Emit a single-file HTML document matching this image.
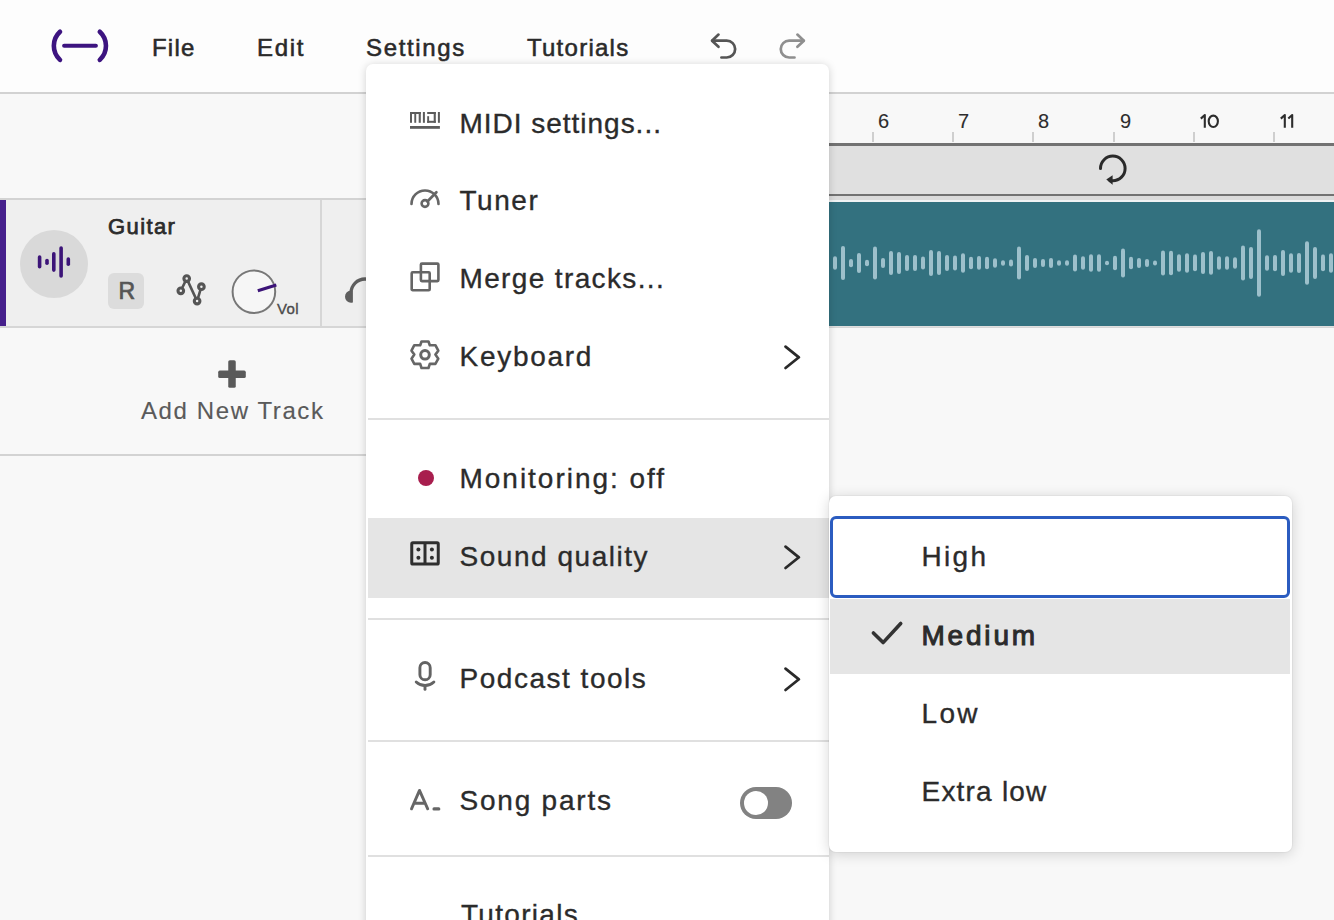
<!DOCTYPE html>
<html><head><meta charset="utf-8">
<style>
*{margin:0;padding:0;box-sizing:border-box}
html,body{width:1334px;height:920px;overflow:hidden;background:#f8f8f8;font-family:"Liberation Sans",sans-serif;color:#2b2b2b}
.a{position:absolute}
.t{position:absolute;line-height:1;white-space:nowrap;-webkit-text-stroke:0.35px currentColor}
#hdr{left:0;top:0;width:1334px;height:94px;background:#fdfdfd;border-bottom:2px solid #d2d2d2}
.hm{font-size:24px;top:35.5px;color:#2a2a2a;-webkit-text-stroke:0.55px #2a2a2a}
#ruler{left:366px;top:95px;width:968px;height:48px;background:#f8f8f8}
.tick{position:absolute;top:132px;width:2px;height:10px;background:#cfcfcf}
.rn{font-size:20px;top:111px;color:#2d2d2d;-webkit-text-stroke:0.1px #2d2d2d}
#loop{left:366px;top:143px;width:968px;height:53px;background:#e0e0e0;border-top:3px solid #727272;border-bottom:2px solid #727272}
#clip{left:829px;top:202px;width:505px;height:124px;background:#33717f}
#trk{left:0;top:198px;width:1334px;height:130px;background:#efefef;border-bottom:2px solid #d6d6d6;border-top:2px solid #d3d3d3}
.mi{font-size:28px;left:459.5px;color:#2b2b2b}
.sm{font-size:28px;left:921.5px;color:#2b2b2b}
.div{position:absolute;left:368px;width:461px;height:2px;background:#e0e0e0}
</style></head><body>

<!-- header -->
<div id="hdr" class="a"></div>
<svg class="a" style="left:48px;top:26px" width="64" height="40" viewBox="0 0 64 40">
 <g fill="none" stroke="#3d1480" stroke-width="4.6" stroke-linecap="round">
 <path d="M12 5.8 A19.1 19.1 0 0 0 12 33.9"/>
 <path d="M51.8 5.8 A19.1 19.1 0 0 1 51.8 33.9"/>
 <path d="M16.1 19.7 H47.9" stroke-width="4"/>
 </g>
</svg>
<div class="t hm" style="left:152px;letter-spacing:1.2px">File</div>
<div class="t hm" style="left:257px;letter-spacing:1.67px">Edit</div>
<div class="t hm" style="left:366px;letter-spacing:1.66px">Settings</div>
<div class="t hm" style="left:527px;letter-spacing:1.25px">Tutorials</div>
<svg class="a" style="left:706px;top:29px" width="36" height="34" viewBox="0 0 36 34">
 <g fill="none" stroke="#555" stroke-width="2.7" stroke-linecap="round" stroke-linejoin="round">
 <path d="M6.5 11.7 H20.75 A8.4 8.4 0 0 1 20.75 28.5 H15.4"/>
 <path d="M12.5 5.6 L6 11.7 L12.5 17.8"/>
 </g>
</svg>
<svg class="a" style="left:774.2px;top:29px" width="36" height="34" viewBox="0 0 36 34">
 <g fill="none" stroke="#8f8f8f" stroke-width="2.7" stroke-linecap="round" stroke-linejoin="round" transform="translate(35.9 0) scale(-1 1)">
 <path d="M6.5 11.7 H20.75 A8.4 8.4 0 0 1 20.75 28.5 H15.4"/>
 <path d="M12.5 5.6 L6 11.7 L12.5 17.8"/>
 </g>
</svg>

<!-- ruler -->
<div id="ruler" class="a"></div>
<div class="tick" style="left:872px"></div><div class="t rn" style="left:878px">6</div>
<div class="tick" style="left:952px"></div><div class="t rn" style="left:958px">7</div>
<div class="tick" style="left:1032px"></div><div class="t rn" style="left:1038px">8</div>
<div class="tick" style="left:1113px"></div><div class="t rn" style="left:1120px">9</div>
<div class="tick" style="left:1193px"></div>
<div class="tick" style="left:1273px"></div><svg class="a" style="left:1195px;top:110px" width="105" height="22" viewBox="0 0 105 22"><g stroke="#2d2d2d" stroke-width="2.1" fill="none" stroke-linejoin="round"><path d="M5.8 8.6 L9.8 5 V17.8"/><ellipse cx="18.3" cy="11.3" rx="4.6" ry="5.7"/><path d="M85.8 8.6 L89.8 5 V17.8"/><path d="M93.3 8.6 L97.2 5 V17.8"/></g></svg>

<div id="loop" class="a"></div>
<svg class="a" style="left:1096px;top:152px" width="34" height="34" viewBox="0 0 34 34">
 <path d="M4.5 16.4 A12.3 12.3 0 1 1 16.8 28.7 H14" fill="none" stroke="#2a2a2a" stroke-width="3" stroke-linecap="round"/>
 <path d="M10.3 27.5 L16.6 23.2 L16.6 32.7 Z" fill="#2a2a2a"/>
</svg>

<!-- track row -->
<div id="trk" class="a"></div>
<div class="a" style="left:0;top:200px;width:6px;height:126px;background:#46208c"></div>
<div class="a" style="left:320px;top:200px;width:2px;height:126px;background:#d6d6d6"></div>
<div class="a" style="left:20px;top:230px;width:68px;height:68px;border-radius:50%;background:#d9d9d9"></div>
<svg class="a" style="left:20px;top:230px" width="68" height="68" viewBox="0 0 68 68">
 <g stroke="#3c1478" stroke-width="3.6" stroke-linecap="round">
 <path d="M19.6 27 V36.8"/><path d="M27 30.6 V33.2"/><path d="M33.8 23.8 V40.1"/><path d="M41.1 18.1 V45.9"/><path d="M48.3 29 V34.2"/>
 </g>
</svg>
<div class="t" style="left:108px;top:216px;font-size:22px;color:#2b2b2b;letter-spacing:1.4px;-webkit-text-stroke:0.75px #2b2b2b">Guitar</div>
<div class="a" style="left:108px;top:273px;width:36px;height:36px;border-radius:6px;background:#dcdcdc"></div>
<div class="t" style="left:118.5px;top:280.3px;font-size:23px;color:#555;-webkit-text-stroke:0.7px #555">R</div>
<svg class="a" style="left:170px;top:268px" width="40" height="40" viewBox="0 0 40 40">
 <g fill="none" stroke="#555">
 <path d="M10.8 22.8 L16.7 10.6 L27.1 33.1 L31.4 18.7" stroke-width="2.6"/>
 <g stroke-width="3.1" fill="#efefef">
 <circle cx="10.8" cy="22.8" r="2.8"/><circle cx="16.7" cy="10.6" r="2.8"/>
 <circle cx="27.1" cy="33.1" r="2.8"/><circle cx="31.4" cy="18.7" r="2.8"/>
 </g></g>
</svg>
<svg class="a" style="left:228px;top:266px" width="52" height="52" viewBox="0 0 52 52">
 <circle cx="25.9" cy="25.7" r="21.3" fill="#f6f6f6" stroke="#777" stroke-width="2"/>
 <path d="M29.8 24.7 L48.3 19" stroke="#3c1478" stroke-width="3.2"/>
</svg>
<div class="t" style="left:277px;top:301px;font-size:15px;color:#4a4a4a;letter-spacing:0.4px">Vol</div>
<svg class="a" style="left:340px;top:272px" width="30" height="36" viewBox="0 0 30 36">
 <path d="M11 30 V21 A14 14 0 0 1 39 21" fill="none" stroke="#5f5f5f" stroke-width="3.3"/>
 <path d="M12.7 18.5 H11 A6 6.15 0 0 0 11 30.8 H12.7 Z" fill="#5f5f5f"/>
</svg>

<!-- clip -->
<div class="a" style="left:366px;top:196px;width:968px;height:4px;background:#dbdbdb"></div>
<div class="a" style="left:366px;top:200px;width:968px;height:2px;background:#f0f3f4"></div>
<div id="clip" class="a"></div>
<svg class="a" style="left:829px;top:202px" width="505" height="124"><g fill="#9dc0cb"><rect x="4" y="54.2" width="4" height="13.5" rx="2"/><rect x="12" y="44.0" width="4" height="34.0" rx="2"/><rect x="20" y="56.9" width="4" height="8.3" rx="2"/><rect x="28" y="51.0" width="4" height="20.0" rx="2"/><rect x="36" y="57.8" width="4" height="6.4" rx="2"/><rect x="44" y="44.5" width="4" height="33.0" rx="2"/><rect x="52" y="56.0" width="4" height="10.0" rx="2"/><rect x="60" y="49.0" width="4" height="24.0" rx="2"/><rect x="68" y="50.0" width="4" height="22.0" rx="2"/><rect x="76" y="53.0" width="4" height="16.0" rx="2"/><rect x="84" y="53.0" width="4" height="16.0" rx="2"/><rect x="92" y="54.5" width="4" height="13.0" rx="2"/><rect x="100" y="48.0" width="4" height="26.0" rx="2"/><rect x="108" y="49.0" width="4" height="24.0" rx="2"/><rect x="116" y="53.0" width="4" height="16.0" rx="2"/><rect x="124" y="53.5" width="4" height="15.0" rx="2"/><rect x="132" y="51.2" width="4" height="19.6" rx="2"/><rect x="140" y="54.8" width="4" height="12.4" rx="2"/><rect x="148" y="54.1" width="4" height="13.7" rx="2"/><rect x="156" y="54.8" width="4" height="12.4" rx="2"/><rect x="164" y="56.3" width="4" height="9.4" rx="2"/><rect x="172" y="58.2" width="4" height="5.6" rx="2"/><rect x="180" y="57.6" width="4" height="6.8" rx="2"/><rect x="188" y="44.5" width="4" height="33.0" rx="2"/><rect x="196" y="53.0" width="4" height="16.0" rx="2"/><rect x="204" y="56.0" width="4" height="10.0" rx="2"/><rect x="212" y="57.0" width="4" height="8.0" rx="2"/><rect x="220" y="56.0" width="4" height="10.0" rx="2"/><rect x="228" y="58.2" width="4" height="5.6" rx="2"/><rect x="236" y="58.2" width="4" height="5.6" rx="2"/><rect x="244" y="52.5" width="4" height="17.0" rx="2"/><rect x="252" y="54.2" width="4" height="13.6" rx="2"/><rect x="260" y="52.2" width="4" height="17.5" rx="2"/><rect x="268" y="52.2" width="4" height="17.5" rx="2"/><rect x="276" y="58.8" width="4" height="4.5" rx="2"/><rect x="284" y="53.8" width="4" height="14.4" rx="2"/><rect x="292" y="46.5" width="4" height="29.0" rx="2"/><rect x="300" y="54.8" width="4" height="12.4" rx="2"/><rect x="308" y="56.0" width="4" height="10.0" rx="2"/><rect x="316" y="57.1" width="4" height="7.8" rx="2"/><rect x="324" y="58.5" width="4" height="5.0" rx="2"/><rect x="332" y="48.5" width="4" height="25.0" rx="2"/><rect x="340" y="48.8" width="4" height="24.5" rx="2"/><rect x="348" y="52.2" width="4" height="17.5" rx="2"/><rect x="356" y="51.3" width="4" height="19.4" rx="2"/><rect x="364" y="52.6" width="4" height="16.7" rx="2"/><rect x="372" y="50.0" width="4" height="22.0" rx="2"/><rect x="380" y="49.1" width="4" height="23.7" rx="2"/><rect x="388" y="54.2" width="4" height="13.6" rx="2"/><rect x="396" y="54.2" width="4" height="13.6" rx="2"/><rect x="404" y="55.2" width="4" height="11.6" rx="2"/><rect x="412" y="43.5" width="4" height="35.0" rx="2"/><rect x="420" y="45.0" width="4" height="32.0" rx="2"/><rect x="428" y="27.2" width="4" height="67.5" rx="2"/><rect x="436" y="53.2" width="4" height="15.5" rx="2"/><rect x="444" y="52.9" width="4" height="16.3" rx="2"/><rect x="452" y="48.0" width="4" height="26.0" rx="2"/><rect x="460" y="51.3" width="4" height="19.4" rx="2"/><rect x="468" y="51.0" width="4" height="20.0" rx="2"/><rect x="476" y="39.2" width="4" height="43.5" rx="2"/><rect x="484" y="45.0" width="4" height="32.0" rx="2"/><rect x="492" y="52.6" width="4" height="16.7" rx="2"/><rect x="500" y="51.3" width="4" height="19.4" rx="2"/></g></svg>

<!-- add new track -->
<div class="a" style="left:0;top:454px;width:366px;height:2px;background:#d3d3d3"></div>
<svg class="a" style="left:217px;top:359px" width="30" height="30" viewBox="0 0 30 30">
 <rect x="11.25" y="1.2" width="7.5" height="27.6" rx="1.6" fill="#5a5a5a"/><rect x="1.2" y="11.6" width="27.6" height="7.5" rx="1.6" fill="#5a5a5a"/>
</svg>
<div class="t" style="left:141px;top:399px;font-size:24px;color:#5a5a5a;letter-spacing:1.6px;-webkit-text-stroke:0.15px #5a5a5a">Add New Track</div>
<div class="a" style="left:829px;top:326px;width:505px;height:1px;background:#dedede"></div>

<!-- main menu -->
<div class="a" style="left:366px;top:64px;width:463px;height:870px;background:#fff;border-radius:7px;box-shadow:0 1px 8px rgba(0,0,0,0.18)"></div>
<!-- rows -->
<svg class="a" style="left:408px;top:108px" width="34" height="24" viewBox="0 0 34 24">
 <g fill="#5c5c5c">
 <rect x="2" y="4" width="10.8" height="2"/>
 <rect x="2" y="4" width="2" height="10.8"/><rect x="6.3" y="4" width="1.9" height="10.8"/><rect x="10.7" y="4" width="2.1" height="10.8"/>
 <rect x="14.9" y="4" width="2" height="10.8"/>
 <rect x="19.2" y="4" width="8.6" height="2"/><rect x="25.7" y="4" width="2.1" height="10.8"/><rect x="19.2" y="12.8" width="8.6" height="2"/><rect x="19.2" y="8.2" width="1.9" height="6.6"/>
 <rect x="29.9" y="4" width="2" height="10.8"/>
 <rect x="2" y="18" width="29.9" height="2.8"/>
 </g>
</svg>
<div class="t mi" style="top:110px;letter-spacing:0.98px">MIDI settings...</div>
<svg class="a" style="left:408px;top:186px" width="34" height="24" viewBox="0 0 34 24">
 <path d="M3.5 18 A13.5 13.5 0 0 1 30.5 18" fill="none" stroke="#666" stroke-width="2.6" stroke-linecap="round"/>
 <circle cx="17" cy="17.5" r="3.4" fill="none" stroke="#666" stroke-width="2.6"/>
 <path d="M19.4 15.5 L28.4 6.3" stroke="#666" stroke-width="2.7" stroke-linecap="round"/>
</svg>
<div class="t mi" style="top:187px;letter-spacing:1.55px">Tuner</div>
<svg class="a" style="left:408px;top:259px" width="34" height="34" viewBox="0 0 34 34">
 <rect x="12.9" y="4.6" width="17.5" height="17.5" rx="1" fill="none" stroke="#666" stroke-width="2.6"/>
 <rect x="3.7" y="13.2" width="18" height="18" rx="1" fill="none" stroke="#666" stroke-width="2.6"/>
</svg>
<div class="t mi" style="top:265px;letter-spacing:1.36px">Merge tracks...</div>
<svg class="a" style="left:408px;top:338px" width="34" height="34" viewBox="0 0 34 34">
 <path d="M13.5 3.5 L20.5 3.5 L21.8 7.2 L27.4 7.2 L30.3 12.7 L27.4 16.6 L30.3 20.7 L27.4 25.9 L21.8 25.9 L20.5 30 L13.5 30 L12.2 25.9 L6.3 25.9 L3.5 20.7 L6.3 16.6 L3.5 12.7 L6.3 7.2 L12.2 7.2 Z" fill="none" stroke="#666" stroke-width="2.6" stroke-linejoin="round"/>
 <circle cx="17" cy="16.8" r="4.3" fill="none" stroke="#666" stroke-width="3"/>
</svg>
<div class="t mi" style="top:343px;letter-spacing:1.71px">Keyboard</div>
<svg class="a" style="left:780px;top:342px" width="24" height="30" viewBox="0 0 24 30">
 <path d="M5.5 4.7 L18.9 15.3 L5.5 26" fill="none" stroke="#2a2a2a" stroke-width="2.75" stroke-linecap="round" stroke-linejoin="round"/>
</svg>
<div class="div" style="top:418px"></div>

<div class="a" style="left:418px;top:470px;width:16px;height:16px;border-radius:50%;background:#a81e4e"></div>
<div class="t mi" style="top:465px;letter-spacing:1.98px">Monitoring: off</div>

<div class="a" style="left:368px;top:518px;width:461px;height:80px;background:#e5e5e5"></div>
<svg class="a" style="left:408px;top:539px" width="34" height="30" viewBox="0 0 34 30">
 <rect x="3.75" y="3.75" width="26.5" height="21.35" rx="1.2" fill="none" stroke="#2f2f2f" stroke-width="3"/>
 <path d="M17 3.75 V25.1" stroke="#2f2f2f" stroke-width="3"/>
 <g fill="#2f2f2f"><circle cx="10.4" cy="10.4" r="2"/><circle cx="10.4" cy="18.75" r="2"/><circle cx="23.9" cy="10.4" r="2"/><circle cx="23.9" cy="18.75" r="2"/></g>
</svg>
<div class="t mi" style="top:543px;letter-spacing:1.53px">Sound quality</div>
<svg class="a" style="left:780px;top:542px" width="24" height="30" viewBox="0 0 24 30">
 <path d="M5.5 4.7 L18.9 15.3 L5.5 26" fill="none" stroke="#2a2a2a" stroke-width="2.75" stroke-linecap="round" stroke-linejoin="round"/>
</svg>
<div class="div" style="top:618px"></div>

<svg class="a" style="left:408px;top:656px" width="34" height="38" viewBox="0 0 34 38">
 <g fill="none" stroke="#636363" stroke-width="2.9" stroke-linecap="round">
 <rect x="11.9" y="6.5" width="10.3" height="17.3" rx="5.15"/>
 <path d="M8.2 26 A12.9 12.9 0 0 0 25.9 26"/>
 <path d="M17 29.6 V33.4"/>
 </g>
</svg>
<div class="t mi" style="top:665px;letter-spacing:1.52px">Podcast tools</div>
<svg class="a" style="left:780px;top:664px" width="24" height="30" viewBox="0 0 24 30">
 <path d="M5.5 4.7 L18.9 15.3 L5.5 26" fill="none" stroke="#2a2a2a" stroke-width="2.75" stroke-linecap="round" stroke-linejoin="round"/>
</svg>
<div class="div" style="top:740px"></div>

<svg class="a" style="left:406px;top:784px" width="40" height="30" viewBox="0 0 40 30">
 <g fill="none" stroke="#666" stroke-width="2.9" stroke-linecap="round" stroke-linejoin="round">
 <path d="M5.5 24.8 L13.5 6.4 L21.7 24.8 M8.6 19.3 H19"/>
 <path d="M28 24.9 H32.8" stroke-width="3.1"/>
 </g>
</svg>
<div class="t mi" style="top:787px;letter-spacing:1.78px">Song parts</div>
<div class="a" style="left:740px;top:787px;width:52px;height:32px;border-radius:16px;background:#828282"></div>
<div class="a" style="left:744px;top:791px;width:24px;height:24px;border-radius:50%;background:#fff"></div>
<div class="div" style="top:855px"></div>
<div class="t mi" style="top:901px;letter-spacing:1.3px;margin-left:1.5px">Tutorials</div>

<!-- submenu -->
<div class="a" style="left:829px;top:496px;width:463px;height:356px;background:#fff;border-radius:7px;box-shadow:0 0 0 1px rgba(0,0,0,0.03),0 2px 14px rgba(0,0,0,0.17)"></div>
<div class="a" style="left:830px;top:516px;width:460px;height:82px;border:3px solid #2b5cc0;border-radius:6px"></div>
<div class="t sm" style="top:543px;letter-spacing:2.33px">High</div>
<div class="a" style="left:830px;top:599px;width:460px;height:75px;background:#e5e5e5"></div>
<svg class="a" style="left:868px;top:618px" width="38" height="30" viewBox="0 0 38 30">
 <path d="M5.4 14.9 L15.1 24.6 L32.7 5.5" fill="none" stroke="#333" stroke-width="3.6" stroke-linecap="round" stroke-linejoin="round"/>
</svg>
<div class="t sm" style="top:622px;letter-spacing:2.8px;-webkit-text-stroke:1px #2b2b2b">Medium</div>
<div class="t sm" style="top:700px;letter-spacing:2.35px">Low</div>
<div class="t sm" style="top:778px;letter-spacing:1.21px">Extra low</div>


</body></html>
